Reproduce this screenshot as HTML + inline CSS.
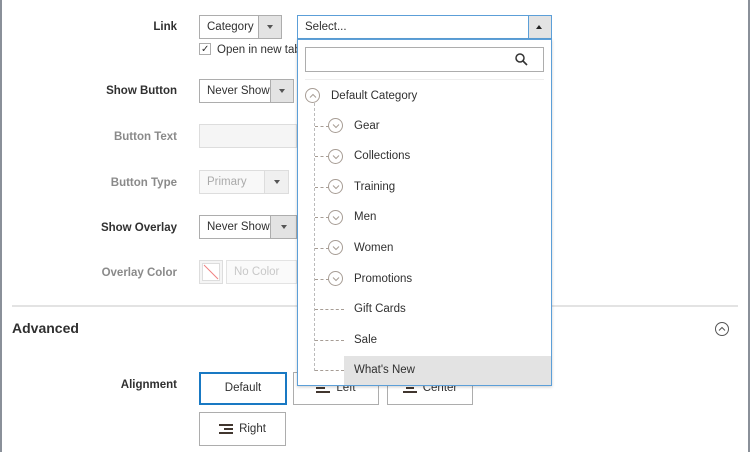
<!DOCTYPE html>
<html><head><style>
*{box-sizing:border-box;margin:0;padding:0}
body{width:750px;height:452px;background:#fff;font-family:"Liberation Sans",sans-serif;font-size:11.5px;color:#303030;position:relative;overflow:hidden}
.a{position:absolute}
.lbl{position:absolute;right:573px;font-weight:bold;color:#303030;font-size:11.5px;line-height:14px}
.dis{color:#8a8a8a}
.sel{position:absolute;border:1px solid #adadad;background:#fff;height:24px;line-height:22px;padding-left:7px;font-size:11.5px}
.arr{position:absolute;top:0;right:0;bottom:0;background:#e3e3e3;border-left:1px solid #adadad}
.arr:after{content:"";position:absolute;left:50%;top:50%;margin:-2px 0 0 -3px;border:3px solid transparent;border-top:4px solid #555;border-bottom:0}
.circ{position:absolute;width:15px;height:15px;border:1px solid #a79d95;border-radius:50%;background:#fff}
.circ svg{position:absolute;left:3px;top:3px}
.it{position:absolute;left:354px;line-height:14px;color:#303030}
.hd{position:absolute;border-top:1px dashed #a79d95;width:14px}
.btn{position:absolute;border:1px solid #adadad;height:33px;line-height:31px;text-align:center;color:#303030}
.ic{display:inline-block;vertical-align:middle;margin-right:6px}
</style></head><body>
<div class="a" style="left:0;top:0;width:2px;height:452px;background:#8a9099"></div>
<div class="a" style="right:0;top:0;width:2px;height:452px;background:#8a9099"></div>

<div class="lbl" style="top:20px">Link</div>
<div class="sel" style="left:199px;top:15px;width:83px">Category<div class="arr" style="width:23px"></div></div>
<div class="a" style="left:199px;top:43px;width:12px;height:12px;border:1px solid #adadad"></div>
<div class="a" style="left:201px;top:44px;font-size:10px">✓</div>
<div class="a" style="left:217px;top:43px;line-height:14px">Open in new tab</div>

<div class="lbl" style="top:84px">Show Button</div>
<div class="sel" style="left:199px;top:79px;width:95px">Never Show<div class="arr" style="width:23px"></div></div>

<div class="lbl dis" style="top:130px">Button Text</div>
<div class="a" style="left:199px;top:124px;width:98px;height:24px;border:1px solid #ddd;background:#f5f5f5"></div>

<div class="lbl dis" style="top:176px">Button Type</div>
<div class="sel" style="left:199px;top:170px;width:90px;border-color:#ddd;background:#f8f8f8;color:#aaa">Primary<div class="arr" style="width:24px;background:#f0f0f0;border-color:#ddd"></div></div>

<div class="lbl" style="top:221px">Show Overlay</div>
<div class="sel" style="left:199px;top:215px;width:98px">Never Show<div class="arr" style="width:26px"></div></div>

<div class="lbl dis" style="top:266px">Overlay Color</div>
<div class="a" style="left:199px;top:260px;width:24px;height:24px;border:1px solid #ddd;background:#f5f5f5"></div>
<svg class="a" style="left:202px;top:263px" width="18" height="18"><rect x="0.5" y="0.5" width="17" height="17" fill="#fff" stroke="#ddd"/><line x1="2" y1="2" x2="16" y2="16" stroke="#f08080" stroke-width="1"/></svg>
<div class="a" style="left:226px;top:260px;width:71px;height:24px;border:1px solid #e3e3e3;background:#fafafa;color:#c8c8c8;line-height:22px;padding-left:7px">No Color</div>

<div class="a" style="left:12px;top:305px;width:726px;height:2px;background:#e3e3e3"></div>
<div class="a" style="left:12px;top:320px;font-size:14px;font-weight:bold;color:#303030">Advanced</div>
<div class="circ" style="left:715px;top:322px;width:14px;height:14px;border-color:#555"><svg width="8" height="8" viewBox="0 0 8 8" style="left:2px;top:2px"><path d="M1 5.5L4 2.5L7 5.5" stroke="#555" fill="none"/></svg></div>

<div class="lbl" style="top:378px">Alignment</div>
<div class="btn" style="left:199px;top:372px;width:88px;border:2px solid #1979c3;line-height:29px">Default</div>
<div class="btn" style="left:293px;top:372px;width:86px"><svg class="ic" width="14" height="10"><rect x="0" y="0" width="14" height="2" fill="#41362f"/><rect x="0" y="4" width="9" height="2" fill="#41362f"/><rect x="0" y="8" width="14" height="2" fill="#41362f"/></svg>Left</div>
<div class="btn" style="left:387px;top:372px;width:86px"><svg class="ic" width="14" height="10"><rect x="0" y="0" width="14" height="2" fill="#41362f"/><rect x="3" y="4" width="8" height="2" fill="#41362f"/><rect x="0" y="8" width="14" height="2" fill="#41362f"/></svg>Center</div>
<div class="btn" style="left:199px;top:412px;width:87px;height:34px;line-height:32px"><svg class="ic" width="14" height="10"><rect x="0" y="0" width="14" height="2" fill="#41362f"/><rect x="5" y="4" width="9" height="2" fill="#41362f"/><rect x="0" y="8" width="14" height="2" fill="#41362f"/></svg>Right</div>

<!-- dropdown -->
<div class="a" style="left:297px;top:15px;width:255px;height:24px;border:1px solid #5c9fd8;line-height:22px;padding-left:7px;background:#fff">Select...
<div class="a" style="right:0;top:0;bottom:0;width:23px;background:#e3e3e3;border-left:1px solid #5c9fd8"></div>
<div class="a" style="right:9px;top:9px;border:3px solid transparent;border-bottom:4px solid #222;border-top:0"></div></div>
<div class="a" style="left:297px;top:39px;width:255px;height:347px;border:1px solid #5c9fd8;background:#fff;box-shadow:0 1px 3px rgba(0,0,0,.2)"></div>
<div class="a" style="left:305px;top:47px;width:239px;height:25px;border:1px solid #adadad"></div>
<svg class="a" style="left:515px;top:53px" width="13" height="13"><circle cx="5" cy="5" r="4" stroke="#333" stroke-width="1.5" fill="none"/><line x1="8" y1="8" x2="12" y2="12" stroke="#333" stroke-width="1.6"/></svg>
<div class="a" style="left:305px;top:79px;width:239px;height:1px;background:#eee"></div>
<div class="a" style="left:344px;top:356px;width:207px;height:29px;background:#e3e3e3"></div>
<div class="a" style="left:314px;top:103px;height:268px;border-left:1px dashed #bbb"></div>
<div class="circ" style="left:305px;top:88px"><svg width="8" height="8" viewBox="0 0 8 8"><path d="M1 5.5L4 2.5L7 5.5" stroke="#a79d95" fill="none"/></svg></div>
<div class="a" style="left:331px;top:89px;line-height:14px">Default Category</div>

<div class="hd" style="left:315px;top:126px"></div><div class="circ" style="left:328px;top:118px"><svg width="8" height="8" viewBox="0 0 8 8"><path d="M1 2.5L4 5.5L7 2.5" stroke="#a79d95" fill="none"/></svg></div><div class="it" style="top:119px">Gear</div>
<div class="hd" style="left:315px;top:156px"></div><div class="circ" style="left:328px;top:149px"><svg width="8" height="8" viewBox="0 0 8 8"><path d="M1 2.5L4 5.5L7 2.5" stroke="#a79d95" fill="none"/></svg></div><div class="it" style="top:149px">Collections</div>
<div class="hd" style="left:315px;top:187px"></div><div class="circ" style="left:328px;top:179px"><svg width="8" height="8" viewBox="0 0 8 8"><path d="M1 2.5L4 5.5L7 2.5" stroke="#a79d95" fill="none"/></svg></div><div class="it" style="top:180px">Training</div>
<div class="hd" style="left:315px;top:217px"></div><div class="circ" style="left:328px;top:210px"><svg width="8" height="8" viewBox="0 0 8 8"><path d="M1 2.5L4 5.5L7 2.5" stroke="#a79d95" fill="none"/></svg></div><div class="it" style="top:210px">Men</div>
<div class="hd" style="left:315px;top:248px"></div><div class="circ" style="left:328px;top:240px"><svg width="8" height="8" viewBox="0 0 8 8"><path d="M1 2.5L4 5.5L7 2.5" stroke="#a79d95" fill="none"/></svg></div><div class="it" style="top:241px">Women</div>
<div class="hd" style="left:315px;top:279px"></div><div class="circ" style="left:328px;top:271px"><svg width="8" height="8" viewBox="0 0 8 8"><path d="M1 2.5L4 5.5L7 2.5" stroke="#a79d95" fill="none"/></svg></div><div class="it" style="top:272px">Promotions</div>
<div class="hd" style="left:315px;top:309px;width:29px"></div><div class="it" style="top:302px">Gift Cards</div>
<div class="hd" style="left:315px;top:340px;width:29px"></div><div class="it" style="top:333px">Sale</div>
<div class="hd" style="left:315px;top:370px;width:29px"></div><div class="it" style="top:363px">What's New</div>
</body></html>
